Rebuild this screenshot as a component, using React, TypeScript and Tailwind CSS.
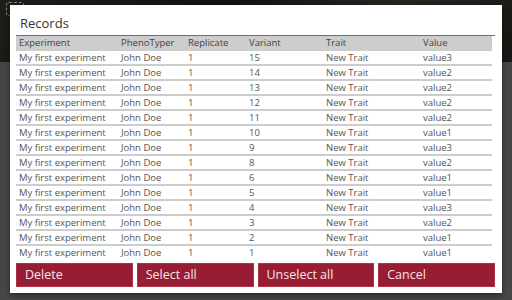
import React from "react";

const rows = [
  ["15", "value3"],
  ["14", "value2"],
  ["13", "value2"],
  ["12", "value2"],
  ["11", "value2"],
  ["10", "value1"],
  ["9", "value3"],
  ["8", "value2"],
  ["6", "value1"],
  ["5", "value1"],
  ["4", "value3"],
  ["3", "value2"],
  ["2", "value1"],
  ["1", "value1"],
];

const cols = "grid grid-cols-[102px_67px_61px_77px_97px_1fr] pl-[3px]";

export default function App() {
  return (
    <div
      className="relative w-[512px] h-[300px] overflow-hidden bg-[#474747]"
      style={{ fontFamily: '"Open Sans", "Noto Sans", sans-serif' }}
    >
      <div className="h-[62px] bg-[linear-gradient(135deg,#1c2019_0%,#10130f_40%,#232820_70%,#151812_100%)] flex items-start">
        <div className="ml-[6px] mt-[2px] w-[18px] h-[14px] border border-dashed border-[#8a8a8a] rounded-[3px]" />
      </div>
      <div className="absolute left-[10px] top-[5px] w-[492px] h-[288px] bg-white shadow-[0_2px_6px_rgba(0,0,0,0.5)] flex flex-col pl-[6px] pr-[7px]">
        <div className="h-[30px] flex items-center pl-[4px] pt-[7px] text-[13px] text-[#333]">Records</div>
        <div className="h-px bg-[#d2434f]" />
        <div className="mr-[3px]">
          <div className={`${cols} h-[15px] items-center bg-[#cdcdcd] text-[9.5px] text-[#444]`}>
            <div>Experiment</div>
            <div>PhenoTyper</div>
            <div>Replicate</div>
            <div>Variant</div>
            <div>Trait</div>
            <div>Value</div>
          </div>
          {rows.map((r, i) => (
            <div
              key={i}
              className={`${cols} h-[15px] items-center text-[9.5px] text-[#555] ${
                i < rows.length - 1 ? "border-b-2 border-[#cccccc]" : ""
              }`}
            >
              <div>My first experiment</div>
              <div>John Doe</div>
              <div>1</div>
              <div>{r[0]}</div>
              <div>New Trait</div>
              <div>{r[1]}</div>
            </div>
          ))}
        </div>
        <div className="mt-[2px] flex gap-[4px]">
          {["Delete", "Select all", "Unselect all", "Cancel"].map((b) => (
            <div
              key={b}
              className="flex-1 h-[24px] bg-[#981d34] border border-[#a83244] flex items-center pl-[8px] text-[12.5px] text-[#f4e6e8]"
            >
              {b}
            </div>
          ))}
        </div>
      </div>
    </div>
  );
}
